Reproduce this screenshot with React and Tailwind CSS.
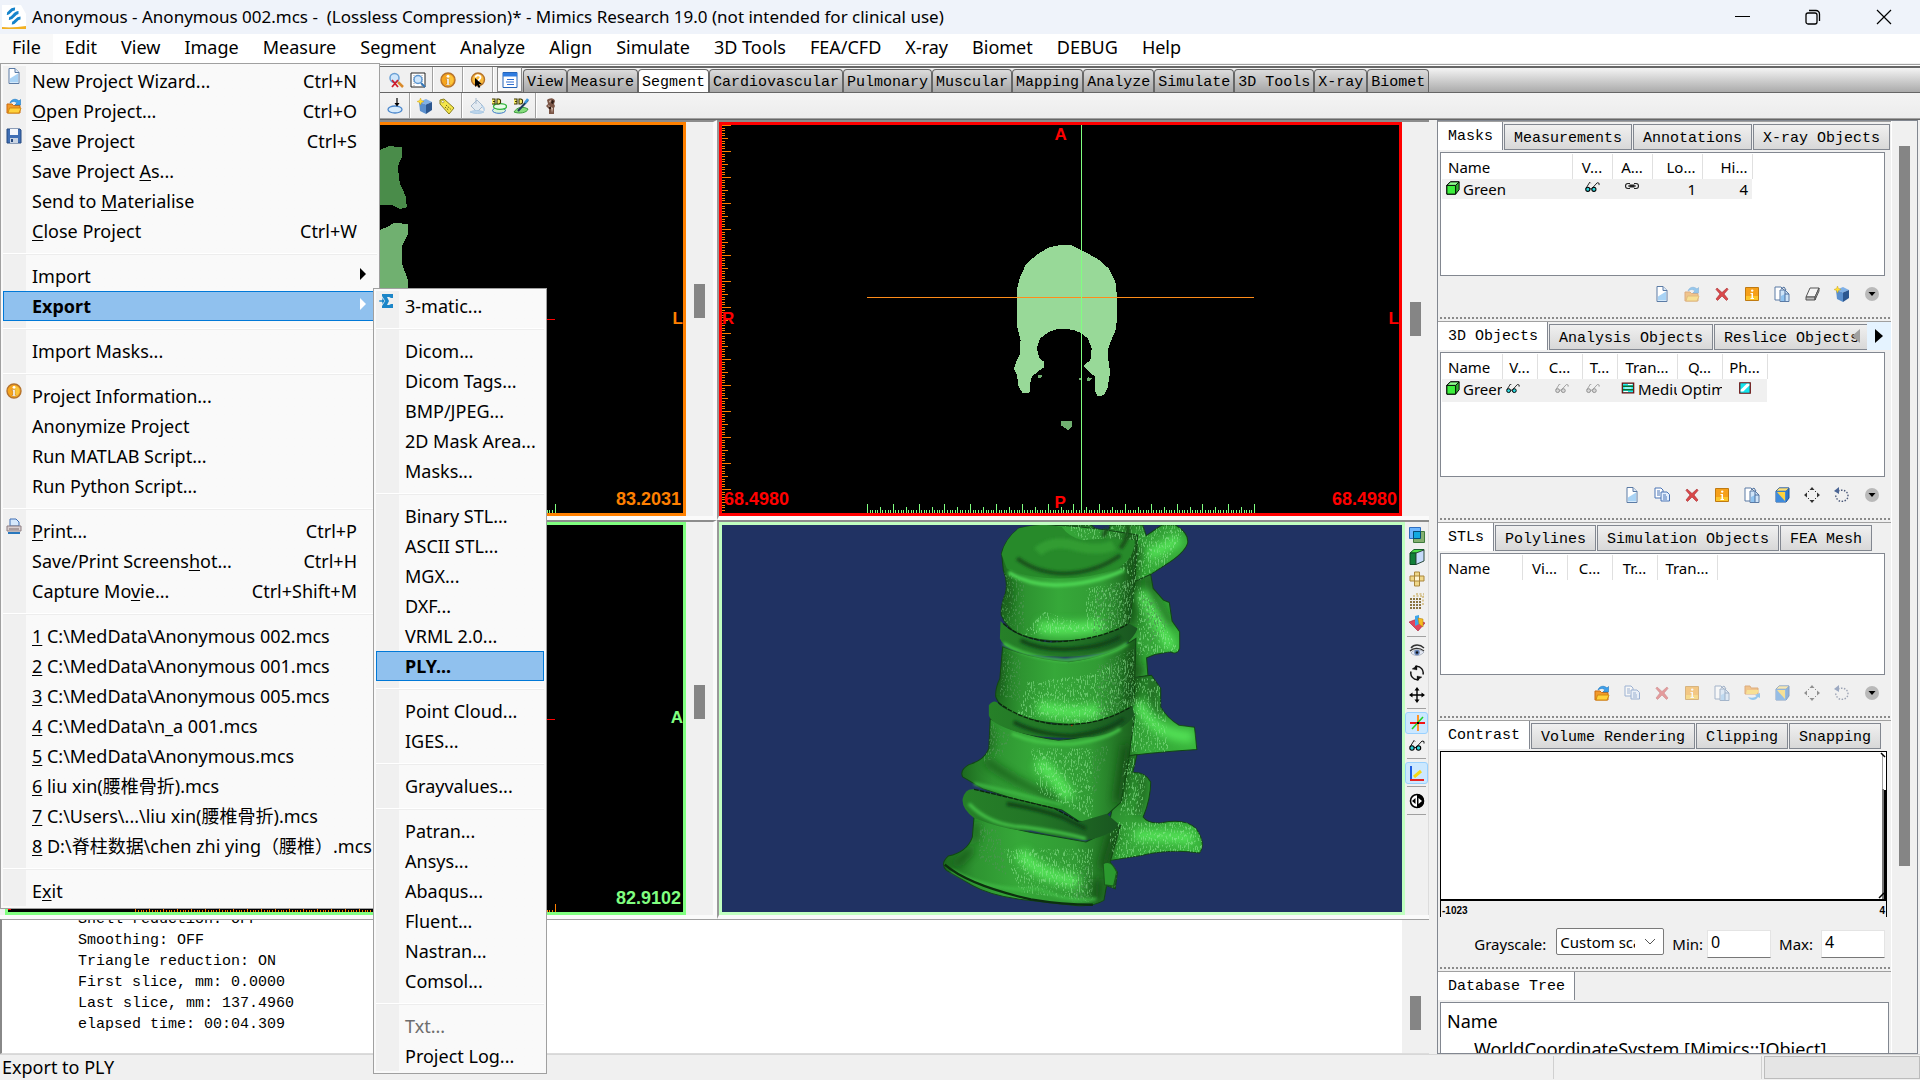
import React from "react";

const UI = "font-['Noto_Sans','Noto_Sans_CJK_SC',sans-serif]";
const MONO = "font-['Liberation_Mono',monospace]";

/* ---------- icons ---------- */

const page = (x, y) => (
  <g>
    <path d={`M${x} ${y}h6l4 4v11h-10z`} fill="#fff" stroke="#5b7ba5" />
    <path d={`M${x + 1} ${y + 14}v-4l8 -5v9z`} fill="#a9d3f5" />
    <path d={`M${x + 6} ${y}v4h4`} fill="#dce9f8" stroke="#5b7ba5" />
  </g>
);

const lens = (
  <g>
    <path d="M10 10l5 5" stroke="#d98a2b" strokeWidth="2.5" />
    <circle cx="6.500" cy="6" r="4.500" fill="#cfe6fb" stroke="#6a9fd4" strokeWidth="1.500" />
  </g>
);

const GLYPHS = {
  page: page(3, 0.5),
  open: (
    <g>
      <path d="M1 6h5l1.500 1.500H14V15H1z" fill="#f39a2b" stroke="#c96a10" />
      <path d="M2 15l1.500-5H15l-2 5z" fill="#ffd23c" stroke="#d38a12" />
      <path d="M4 5c1-4 6-5 9-2l1.500-1.500V7H9l1.800-2C9 3 6.500 3 4 5z" fill="#3da0ec" stroke="#2478bd" strokeWidth=".6" />
    </g>
  ),
  save: (
    <g>
      <path d="M1 1h13l1 1v13H1z" fill="#3f6fb5" stroke="#274a80" />
      <path d="M4 1h8v6H4z" fill="#f4f7fb" />
      <path d="M4 10h8v5H4z" fill="#c9d4e3" />
      <path d="M5 11h2v3H5z" fill="#274a80" />
    </g>
  ),
  info: (
    <g>
      <circle cx="8" cy="8" r="7" fill="#f6a51e" stroke="#b4722c" strokeWidth="1.400" />
      <path d="M8 2.500a5.500 5.500 0 0 1 0 11z" fill="#fbc53a" />
      <path d="M6 6.500h3v5.500h1v1H6v-1h1V7.500H6z" fill="#fff" stroke="#a86a20" strokeWidth=".4" />
      <circle cx="8" cy="4.300" r="1.400" fill="#fff" />
    </g>
  ),
  print: (
    <g>
      <path d="M4 8V1h6l3 3v4z" fill="#d6e8fb" stroke="#3f6fb5" />
      <path d="M1 8h14v5H1z" fill="#d9cfd0" stroke="#8e7f82" />
      <path d="M2 15h12" stroke="#2877bd" strokeWidth="2" />
      <path d="M3 11h10" stroke="#7a6a6d" />
    </g>
  ),
  matic: (
    <g fill="#1c86c8">
      <path d="M3 1h11v4h-2l-2-1H8l2 4-2 4h2l2-1h2v4H3v-2l3-5-3-5z" />
      <path d="M0 7h3V4.500L6 8l-3 3.500V9H0z" stroke="#f0f0f0" strokeWidth=".5" />
    </g>
  ),
  lensX: (
    <g>
      {lens}
      <path d="M4 8l6 7M10 8l-6 7" stroke="#cf1d2b" strokeWidth="1.800" />
    </g>
  ),
  lensPage: (
    <g>
      <path d="M1 1h14v14H1z" fill="#fff" stroke="#222" />
      <path d="M4 1v14M12 1v14" stroke="#999" strokeDasharray="1 1" />
      <circle cx="8" cy="7.500" r="4" fill="#cfe6fb" stroke="#5b95d0" strokeWidth="1.500" />
      <path d="M11 11l4 4" stroke="#3477b8" strokeWidth="2" />
    </g>
  ),
  help: (
    <g>
      <circle cx="8" cy="7.500" r="6.500" fill="#f8b93c" stroke="#b4722c" strokeWidth="1.400" />
      <path d="M5.500 5.500c0-3 5.500-3 5 .2-.2 1.600-2.500 1.600-2.500 4" fill="none" stroke="#fff" strokeWidth="1.800" />
      <path d="M5 6v9l2.200-2 1.600 3 1.600-1-1.600-2.800H12z" fill="#000" />
    </g>
  ),
  list: (
    <g>
      <path d="M1 .5h14v15H1z" fill="#fff" stroke="#2464b8" />
      <path d="M1 1h14v3.500H1z" fill="#2f7ce0" />
      <path d="M5 7.500h7M4 10h8M5 12.500h7" stroke="#2f6fd0" />
    </g>
  ),
  project: (
    <g>
      <ellipse cx="8" cy="11.500" rx="7" ry="3.500" fill="#d7ebfb" stroke="#4a87cc" strokeWidth="1.300" />
      <path d="M10 0v6" stroke="#000" strokeWidth="1.200" />
      <path d="M7.500 5h5L10 8.500z" fill="#000" />
    </g>
  ),
  cube: (
    <g>
      <path d="M2 4l7-3 6 3-6 2.500z" fill="#7fb0e6" />
      <path d="M2 4l7 2.500V16l-6-3z" fill="#5a8fcd" />
      <path d="M15 4L9 6.500V16l6-4z" fill="#2c5790" />
      <path d="M3.500 0l1 2.500L7 3.500 4.500 4.500l-1 2.500-1-2.500L0 3.500l2.500-1z" fill="#ffdd33" stroke="#c79a10" strokeWidth=".4" />
    </g>
  ),
  tag: (
    <g>
      <path d="M1 2l4-1 10 9-5 6L1 6z" fill="#f4e64a" stroke="#8a7f1e" />
      <circle cx="3.800" cy="3.600" r="1.200" fill="#fff" stroke="#8a7f1e" strokeWidth=".6" />
      <path d="M7 7l5 4.500M6 9l4 3.500" stroke="#6b6318" strokeDasharray="1.500 1" />
    </g>
  ),
  bucket: (
    <g opacity=".6">
      <path d="M2 8l6-6 6 6-6 6z" fill="#dbe7f3" stroke="#7596b8" />
      <path d="M7 6V0" stroke="#7596b8" />
      <path d="M1 14c4-2 9-2 14 0-3 2-10 2-14 0zM12 7c3 1 4 4 3 6" fill="#9cc5ea" stroke="#7fb0dc" />
    </g>
  ),
  ring3d: (
    <g>
      <ellipse cx="8" cy="12.500" rx="6.500" ry="2.800" fill="#d7f5d7" stroke="#3c78c8" />
      <ellipse cx="9" cy="8.500" rx="6.500" ry="2.800" fill="#e9fbe9" stroke="#2fb53a" strokeWidth="1.300" />
      <path d="M1 1h3v5H1M2 3.500h2M6 1h2l1.500 1v3L8 6H6z" fill="#f5ec6a" stroke="#3b3500" strokeWidth="1.100" />
    </g>
  ),
  brush3d: (
    <g>
      <path d="M1 14c3-5 9-6 14-3-1 4-9 5-14 3z" fill="#86dd7c" stroke="#3a9d3c" />
      <path d="M1 1h3v5H1M2 3.500h2M6 1h2l1.500 1v3L8 6H6z" fill="#f5ec6a" stroke="#3b3500" strokeWidth="1.100" />
      <path d="M15 2L5 13" stroke="#1c3c5c" strokeWidth="2" />
      <path d="M15 1l-3 4" stroke="#3d97dd" strokeWidth="2.500" />
    </g>
  ),
  bone: (
    <g>
      <path d="M4 2c2-2 7-3 8 1l-1 3 1 2-1 2 0 6H6V11L3 8l2-2z" fill="#7a5546" />
      <path d="M6 3l2-1-1 3zM8 9l2 1-1 5zM5 7l2 1-1 1z" fill="#dcc6b8" />
      <path d="M9 2l2 1-1 3-2-1zM6 9h2v2H6z" fill="#2c1a14" />
    </g>
  ),
  del: <path d="M3 2l5 4.500L13 2l1 1.500L10 8l4 5-1.500 1.500L8 10l-4.500 4.500L2 13l4-5-4-4.500z" fill="#d9484a" stroke="#a82a2e" strokeWidth=".6" />,
  infoBox: (
    <g>
      <path d="M1.500 1.500h13v13h-13z" fill="#f6a01a" stroke="#c07a10" />
      <path d="M2 10h12v4H2z" fill="#fcc62c" />
      <path d="M6.500 7H9v5h1v1H6.500v-1h1V8h-1z" fill="#fff" />
      <circle cx="8.200" cy="4.600" r="1.200" fill="#fff" />
    </g>
  ),
  pages: (
    <g>
      <path d="M1 1h6l4 4v9H1z" fill="#fff" stroke="#5b7ba5" />
      <path d="M6 4h5l4 4v7.500H6z" fill="#cfe4f8" stroke="#5b7ba5" />
      <path d="M7 15v-5l4-2v7z" fill="#8fc3f0" />
      <path d="M7 3l3-2 2 3M11 4v4h4M11 8v7" fill="none" stroke="#4c6f9d" />
    </g>
  ),
  copy: (
    <g>
      <path d="M1 1h6l2 2v8H1z" fill="#fff" stroke="#4a74b5" />
      <path d="M7 5h6l2.500 2.500V14H7z" fill="#e3efff" stroke="#4a74b5" />
      <path d="M3 4h3M3 6h3M3 8h3M9 8h3M9 10h4M9 12h4" stroke="#4a74b5" />
    </g>
  ),
  eraser: (
    <g>
      <path d="M6 2h9l-4 9H2z" fill="#f4f4f4" stroke="#555" />
      <path d="M2 11h9v3H2zM11 11l4-9v3l-4 9z" fill="#bbb" stroke="#555" />
    </g>
  ),
  drop: (
    <g>
      <circle cx="8" cy="8" r="7" fill="#b9b9b9" />
      <path d="M4.500 6h7L8 10z" fill="#000" />
    </g>
  ),
  boxYellow: (
    <g>
      <path d="M2 4l3-3h10v10l-3 4H2z" fill="#3277c8" stroke="#1d5396" />
      <path d="M2 4h10v11H2z" fill="#3f8bdc" />
      <path d="M3 5h8v9z" fill="#ffd23c" />
      <path d="M5 1h10l-3 3H2z" fill="#ffe27a" stroke="#1d5396" strokeWidth=".5" />
    </g>
  ),
  moveDots: (
    <g fill="#333">
      <path d="M8 0l2.500 3h-5zM8 16l2.500-3h-5zM0 8l3-2.500v5zM16 8l-3-2.500v5z" />
      <path d="M4 4h1v1H4zM11 4h1v1h-1zM4 11h1v1H4zM11 11h1v1h-1z" />
    </g>
  ),
  rotateDots: (
    <g>
      <path d="M4 4c5-2 10 0 10 5s-7 7-10 4-2-4-2-5" fill="none" stroke="#4a5878" strokeWidth="1.400" strokeDasharray="1.500 1.500" />
      <path d="M5 0v7L0 4z" fill="#4b6595" />
    </g>
  ),
  folderSync: (
    <g>
      <path d="M1 1h5l1 2h7v6H1z" fill="#f39a2b" stroke="#c96a10" />
      <path d="M2 9l1-4h12l-2 4z" fill="#ffd23c" />
      <path d="M4 12c2 4 8 4 10 0l2 1V8l-5 2 1.500 1C11 13 7 13 4 12z" fill="#3da0ec" />
    </g>
  ),
  overlap: (
    <g>
      <path d="M.5 .5h11v11H.5z" fill="#6db6ff" stroke="#2f6fc0" />
      <path d="M4.500 4.500h11v11h-11z" fill="#84b070" stroke="#3f7a3c" />
      <path d="M4.500 4.500h7v7h-7z" fill="#12a9e0" stroke="#054c78" />
    </g>
  ),
  greenBox: (
    <g>
      <path d="M1 4l4-3.500h10L13 4z" fill="#4ee04a" stroke="#17622c" />
      <path d="M1 4h6v11.500H1z" fill="#13803a" stroke="#0c4a22" />
      <path d="M7 4l8-3v11l-8 3.500z" fill="#c7dbfb" stroke="#2a4a3c" />
    </g>
  ),
  cross3d: (
    <g fill="#f0d88a" stroke="#a9853a">
      <path d="M5.500 1h5v4h4.500v5h-4.500v5h-5v-5H1V5h4.500z" />
      <path d="M5.500 5h5v5h-5z" fill="#fff4d0" />
    </g>
  ),
  dots3d: (
    <g>
      <path d="M1 6h11M1 9h11M1 12h11M1 15h11" stroke="#8a7440" strokeWidth="2" strokeDasharray="2 1" />
      <path d="M4 3h11M7 1h8M14 3v10" fill="none" stroke="#d0b878" strokeWidth="1.500" strokeDasharray="2 1.500" />
    </g>
  ),
  planes: (
    <g>
      <path d="M0 7l8-3 8 4-7 8z" fill="#e2445c" stroke="#a51f38" strokeWidth=".6" />
      <path d="M6 1l4-1v9l-4 2z" fill="#3fa6ea" />
      <path d="M9 3l5 1v8l-4-3z" fill="#f7bd22" stroke="#a9780c" strokeWidth=".5" />
    </g>
  ),
  eye: (
    <g fill="none">
      <path d="M2 5c3-4 9-4 13 0M1 8c3-3 9-4 14 0" stroke="#333" strokeWidth="1.300" />
      <path d="M2 10c3-4 9-4 13-1-3 4-9 5-13 1z" fill="#e3e8f2" stroke="#8a93a5" strokeWidth=".6" />
      <circle cx="8" cy="9.500" r="2.700" fill="#5f7fb5" />
      <circle cx="8" cy="9.500" r="1.200" fill="#111" />
    </g>
  ),
  rotate: (
    <g fill="none" stroke="#111" strokeWidth="1.500">
      <path d="M6 1.500c6-1 9 4 8 8M10 14.500c-6 1-9-4-8-8" />
      <path d="M3 4l5-3.500V5zM13 12l-5 3.500V11z" fill="#111" strokeWidth=".3" />
    </g>
  ),
  move: (
    <g>
      <path d="M8 2v12M2 8h12" stroke="#000" strokeWidth="1.400" />
      <path d="M8 0l2.500 3.500h-5zM8 16l2.500-3.500h-5zM0 8l3.500-2.500v5zM16 8l-3.500-2.500v5z" />
    </g>
  ),
  axes: (
    <g>
      <path d="M9 0v16" stroke="#ff9326" strokeWidth="2" />
      <path d="M1 8h15" stroke="#f21414" strokeWidth="2" />
      <path d="M3 14L14 2" stroke="#22d022" strokeWidth="1.600" />
      <path d="M8 7h2v2H8z" />
    </g>
  ),
  glasses: (
    <g fill="none" stroke="#000" strokeWidth="1.100">
      <circle cx="3" cy="11" r="2.200" fill="#2fd6dc" />
      <circle cx="9.500" cy="11" r="2.200" fill="#2fd6dc" />
      <path d="M1 10L5 3.500l1 1M7.500 10L13 4l2 .5v2M5.200 10.500h2" strokeWidth=".9" />
    </g>
  ),
  corner: (
    <g>
      <path d="M2 1v14" stroke="#1d5ce0" strokeWidth="2" />
      <path d="M1 15h14" stroke="#e62222" strokeWidth="2" />
      <path d="M5 12l7-6" stroke="#f5d714" strokeWidth="3" />
    </g>
  ),
  contrast: (
    <g>
      <circle cx="8" cy="8" r="6.500" fill="#fff" stroke="#000" strokeWidth="1.600" />
      <path d="M8 1a7 7 0 0 1 0 14z" />
      <path d="M6.500 5v6L3 8z" />
      <path d="M9.500 5v6L13 8z" fill="#fff" />
    </g>
  ),
  link: (
    <g fill="none" stroke="#222" strokeWidth="1.100">
      <path d="M6 4.500H4a2.300 2.300 0 0 0 0 5h2M10 4.500h2a2.300 2.300 0 0 1 0 5h-2M4 7h8M6 6h4v2H6z" />
    </g>
  ),
  block: (
    <g stroke="#000" strokeWidth="1.100">
      <path d="M1 5l4-4h10v9l-4 5H1z" fill="#2fae2f" />
      <path d="M1 5h10v10H1z" fill="#3cf03c" />
      <path d="M1 5l4-4h10l-4 4z" fill="#8dff8d" />
    </g>
  ),
  transp: (
    <g>
      <path d="M1.500 2.500h13v11h-13z" fill="#22f0f0" stroke="#6b0a0a" strokeWidth="1.400" />
      <path d="M2 6h12M2 10h12" stroke="#0f6b2f" strokeWidth="1.600" />
      <path d="M4 8h8M8 4h5M3 12h5" stroke="#fff" strokeWidth="1.400" />
    </g>
  ),
  photo: (
    <g>
      <path d="M2 2h12v12H2z" fill="#12e6ee" stroke="#6b0a0a" strokeWidth="1.400" />
      <path d="M3 10l7-7h3v2l-7 7H3z" fill="#fff" />
    </g>
  ),
  logo: (
    <g>
      <path d="M0 0h19l5 9v13H0z" fill="#fff" />
      <path d="M0 24h24v-3C16 22 8 23 0 22z" fill="#f2b022" />
      <path d="M5 8.500c3 .5 3-5 8-4.500M7 13.500c4 .5 5-6 9.500-6M10 18c3 .5 4-5 8.500-5" fill="none" stroke="#1583cb" strokeWidth="3" />
    </g>
  ),
};

function Icon({ name, size = 16, box = 16, className = "" }) {
  return (
    <svg viewBox={`0 0 ${box} ${box}`} width={size} height={size} className={`shrink-0 ${className}`} aria-hidden="true">
      {GLYPHS[name]}
    </svg>
  );
}

/* ---------- title, menu bar, tool bars ---------- */

function TitleBar() {
  return (
    <header className="flex h-[34px] shrink-0 items-center bg-[#eff3fa] pl-0.5">
      <Icon name="logo" size={24} box={24} />
      <h1 className="ml-1.5 flex-1 text-[17px] leading-6 whitespace-pre">
        Anonymous - Anonymous 002.mcs -  (Lossless Compression)* - Mimics Research 19.0 (not intended for clinical use)
      </h1>
      <button aria-label="Minimize" className="grid h-full w-[70px] place-items-center">
        <svg width="16" height="16" stroke="#000" strokeWidth="1"><path d="M0 7.500h15" /></svg>
      </button>
      <button aria-label="Restore" className="grid h-full w-[70px] place-items-center">
        <svg width="16" height="16" fill="none" stroke="#000" strokeWidth="1.300">
          <rect x="1" y="4" width="11" height="11" rx="2" />
          <path d="M4 1.500h7a3.500 3.500 0 0 1 3.500 3.500v7" />
        </svg>
      </button>
      <button aria-label="Close" className="grid h-full w-[72px] place-items-center">
        <svg width="16" height="16" stroke="#000" strokeWidth="1.200"><path d="M1 1l14 14M15 1L1 15" /></svg>
      </button>
    </header>
  );
}

const MENUS = ["File", "Edit", "View", "Image", "Measure", "Segment", "Analyze", "Align", "Simulate", "3D Tools", "FEA/CFD", "X-ray", "Biomet", "DEBUG", "Help"];

function MenuBar() {
  return (
    <nav className="flex h-[29px] shrink-0 bg-white">
      {MENUS.map((m, i) => (
        <button key={m} className={`px-3 pb-1 text-lg leading-6 ${i === 0 ? "bg-[#f9f9f9]" : ""}`}>{m}</button>
      ))}
    </nav>
  );
}

const Sep = () => <div className="mx-[3px] h-full w-0.5 border-l border-[#a0a0a0] bg-white" />;
const Tool = ({ name, label, wide }) => (
  <button aria-label={label || name} className={`grid h-full place-items-center ${wide ? "w-[25px] border border-[#888] bg-[#f8f8f8]" : "w-[22px]"}`}>
    <Icon name={name} />
  </button>
);

const RIBBON = ["View", "Measure", "Segment", "Cardiovascular", "Pulmonary", "Muscular", "Mapping", "Analyze", "Simulate", "3D Tools", "X-ray", "Biomet"];

function ToolBars() {
  return (
    <div className="shrink-0 border-t border-[#f0f0f0] bg-[#f0f0f0]">
      <div className="h-0.5 border-t border-[#a0a0a0] bg-white" />
      <div className="flex h-[27px] border-b border-[#666]">
        <div className="flex border-t border-[#666] pl-[385px]">
          <Tool name="lensX" />
          <Tool name="lensPage" />
          <Sep />
          <Tool name="info" />
          <Sep />
          <Tool name="help" />
          <Sep />
          <Tool name="list" wide />
        </div>
        <div className={`flex flex-1 items-end border-t-2 border-[#666] bg-linear-to-b from-[#f4f4f4] to-[#ababab] pl-px ${MONO}`}>
          {RIBBON.map((t) => (
            <button
              key={t}
              className={`h-[23px] rounded-t-[4px] border border-b-0 border-[#666] px-[3px] text-[15px] leading-[25px] ${t === "Segment" ? "bg-white" : "bg-linear-to-b from-[#dcdcdc] to-[#a6a6a6]"}`}
            >
              {t}
            </button>
          ))}
        </div>
      </div>
      <div className="flex h-[26px] border-b border-[#a0a0a0] bg-linear-to-b from-[#f4f4f4] to-[#ececec] pl-[384px]">
        <Tool name="project" />
        <Sep />
        <Tool name="cube" />
        <Tool name="tag" />
        <Sep />
        <Tool name="bucket" />
        <Tool name="ring3d" />
        <Tool name="brush3d" />
        <Sep />
        <Tool name="bone" />
      </div>
    </div>
  );
}

/* ---------- drop-down menus ---------- */

const FILE_MENU = [
  ["New Project Wizard...", "Ctrl+N", "page"],
  ["_Open Project...", "Ctrl+O", "open"],
  ["_Save Project", "Ctrl+S", "save"],
  ["Save Project _As..."],
  ["Send to _Materialise"],
  ["_Close Project", "Ctrl+W"],
  null,
  ["Import", "sub"],
  ["Export", "sub"],
  null,
  ["Import Masks..."],
  null,
  ["Project Information...", "", "info"],
  ["Anonymize Project"],
  ["Run MATLAB Script..."],
  ["Run Python Script..."],
  null,
  ["_Print...", "Ctrl+P", "print"],
  ["Save/Print Screens_hot...", "Ctrl+H"],
  ["Capture Mo_vie...", "Ctrl+Shift+M"],
  null,
  ["_1 C:\\MedData\\Anonymous 002.mcs"],
  ["_2 C:\\MedData\\Anonymous 001.mcs"],
  ["_3 C:\\MedData\\Anonymous 005.mcs"],
  ["_4 C:\\MedData\\n~a 001.mcs"],
  ["_5 C:\\MedData\\Anonymous.mcs"],
  ["_6 liu xin(腰椎骨折).mcs"],
  ["_7 C:\\Users\\...\\liu xin(腰椎骨折).mcs"],
  ["_8 D:\\脊柱数据\\chen zhi ying（腰椎）.mcs"],
  null,
  ["E_xit"],
];

const EXPORT_MENU = [
  ["3-matic...", "", "matic"], null,
  ["Dicom..."], ["Dicom Tags..."], ["BMP/JPEG..."], ["2D Mask Area..."], ["Masks..."], null,
  ["Binary STL..."], ["ASCII STL..."], ["MGX..."], ["DXF..."], ["VRML 2.0..."], ["PLY..."], null,
  ["Point Cloud..."], ["IGES..."], null,
  ["Grayvalues..."], null,
  ["Patran..."], ["Ansys..."], ["Abaqus..."], ["Fluent..."], ["Nastran..."], ["Comsol..."], null,
  ["Txt..."], ["Project Log..."],
];

/* "_" marks the mnemonic letter, "~" is a literal underscore */
function Mnemonic({ text }) {
  const i = text.indexOf("_");
  const clean = (s) => s.replace("~", "_");
  if (i < 0) return clean(text);
  return (
    <>
      {clean(text.slice(0, i))}
      <u className="underline-offset-2">{text[i + 1]}</u>
      {clean(text.slice(i + 2))}
    </>
  );
}

function Menu({ items, active, disabled, className }) {
  return (
    <div role="menu" className={`absolute z-10 border border-[#a0a0a0] bg-[#f9f9f9] p-0.5 ${className}`}>
      <div className="bg-linear-to-r from-[#f0f0f0] from-[23px] to-[#f9f9f9] to-[23px]">
        {items.map((it, i) => {
          if (!it) return <div key={i} className="flex h-[15px] items-center"><div className="h-0.5 w-full border-t border-white bg-[#ededed]" /></div>;
          const [text, key, icon] = it;
          const on = text === active;
          return (
            <button
              key={i}
              role="menuitem"
              disabled={text === disabled}
              className={`flex h-[30px] w-full items-center overflow-hidden pr-5 text-lg leading-7 whitespace-nowrap disabled:text-[#6d6d6d] ${on ? "bg-[#90c1ee] font-bold outline outline-[#0078d7] -outline-offset-1" : ""}`}
            >
              <span className="flex h-full w-[29px] shrink-0 items-start pt-0.5 pl-[3px]">{icon && <Icon name={icon} />}</span>
              <span className="shrink-0"><Mnemonic text={text} /></span>
              {key === "sub" ? (
                <svg width="7" height="12" className={`-mr-2.5 mb-1 ml-auto ${on ? "fill-white" : "fill-black"}`}><path d="M0 0l6 6-6 6z" /></svg>
              ) : (
                <span className="ml-auto">{key}</span>
              )}
            </button>
          );
        })}
      </div>
    </div>
  );
}

/* ---------- view ports ---------- */

const range = (n) => Array.from({ length: n }, (_, i) => i);

function RulerX({ x0, x1, y, color }) {
  const n = 150;
  return (
    <g stroke={color}>
      {range(n + 1).map((i) => {
        const x = Math.round(x0 + ((x1 - x0) * i) / n) + 0.5;
        const len = i % 10 === 0 ? 8 : i % 5 === 0 ? 5 : 2;
        return <path key={i} d={`M${x} ${y}v${-len}`} />;
      })}
    </g>
  );
}

function RulerY({ h, color }) {
  return (
    <g stroke={color}>
      {range(149).map((i) => {
        const y = Math.round(i * 2.6) + 0.5;
        if (y > h) return null;
        const len = i % 10 === 0 ? 9 : i % 5 === 0 ? 6 : 3;
        return <path key={i} d={`M0 ${y}h${len}`} />;
      })}
    </g>
  );
}

function Scroll({ before, after }) {
  return (
    <div className="flex w-[27px] shrink-0 flex-col bg-[#f0f0f0] pl-2">
      <div className={before} />
      <div className="h-[34px] w-[11px] bg-[#858585]" />
      <div className={after} />
    </div>
  );
}

const Cell = ({ children, className }) => (
  <div className={`flex min-h-0 min-w-0 border-t-2 border-b-4 border-t-[#8c8c8c] border-b-[#fafafa] ${className}`}>{children}</div>
);

const labelCls = "absolute font-['Liberation_Sans',Arial,sans-serif] font-bold";
const letterCls = `${labelCls} text-[17px] leading-5`;
const valueCls = `${labelCls} bottom-1 text-lg leading-5`;

function Coronal() {
  return (
    <div className="relative min-w-0 flex-1 border-[3px] border-[#ff8000] bg-black">
      <svg viewBox="0 0 675 387" preserveAspectRatio="none" className="block h-full w-full" shapeRendering="crispEdges">
        <g transform="translate(-8 -125) scale(.408 .3333)">
          <path d="M930 450L955 438L985 442V470L975 500L980 550L995 590L997 622L980 627L960 615H930z" fill="#4a8c4a" />
          <path d="M930 690L950 680L965 668L1000 672V700L985 740V790L1000 840V862H930z" fill="#70b070" />
        </g>
        <path d="M539 194.500h8" stroke="#f00" />
        <RulerX x0={127} x1={547} y={387} color="#80ff80" />
      </svg>
      <span className={`${letterCls} top-1/2 right-0 -mt-2.5 text-[#ff8000]`}>L</span>
      <span className={`${valueCls} right-0.5 text-[#ff8000]`}>83.2031</span>
    </div>
  );
}

function Sagittal() {
  return (
    <div className="relative min-w-0 flex-1 border-[3px] border-[#80ff80] bg-black">
      <svg viewBox="0 0 675 387" preserveAspectRatio="none" className="block h-full w-full" shapeRendering="crispEdges">
        <path d="M539 194.500h8M0 384.500h3" stroke="#f00" />
        <RulerX x0={127} x1={547} y={387} color="#ff8000" />
      </svg>
      <span className={`${letterCls} top-1/2 right-0 -mt-2.5 text-[#80ff80]`}>A</span>
      <span className={`${valueCls} right-0.5 text-[#80ff80]`}>82.9102</span>
    </div>
  );
}

function Axial() {
  return (
    <div className="relative min-w-0 flex-1 border-[3px] border-[#ff0000] bg-black text-[#ff0000]">
      <svg viewBox="0 0 677 387" preserveAspectRatio="none" className="block h-full w-full" shapeRendering="crispEdges">
        <g transform="translate(-22 -15) scale(.4592 .3333)">
          <path
            fill="#98d998"
            d="M735 432L760 412L780 406L795 404L810 406L830 420L850 434L870 450L890 475L899 498L905 518L909 570V620L905 660L897 685L889 715V745L893 785L888 830L880 855L865 857L861 845V800L850 787L834 767L850 750L853 715L845 685L830 668L815 660L795 655L775 658L760 665L740 685L733 715L740 745L750 755V770L735 785L723 798L719 820V845L712 849L703 848L694 830L690 795L684 775L690 750L697 730L698 690L690 645V540L697 500L710 462z"
          />
          <path d="M787 933H811V947L802 960L797 955L785 944zM735 800l3-6h7v4l-3 6h-7zM842 802l5-1 6 3-3 7h-7zM825 804h4v4h-4z" fill="#70b070" />
        </g>
        <path d="M145 172.500H532" stroke="#ff8c1a" />
        <path d="M359.500 0V387" stroke="#80ff80" />
        <RulerX x0={145} x1={532} y={387} color="#80ff80" />
        <RulerY h={387} color="#ff8000" />
      </svg>
      <span className={`${letterCls} top-0 left-1/2 -ml-1.5`}>A</span>
      <span className={`${letterCls} bottom-0 left-1/2 -ml-1.5`}>P</span>
      <span className={`${letterCls} top-1/2 left-0 -mt-2.5`}>R</span>
      <span className={`${letterCls} top-1/2 right-0 -mt-2.5`}>L</span>
      <span className={`${valueCls} left-0.5`}>68.4980</span>
      <span className={`${valueCls} right-0.5`}>68.4980</span>
    </div>
  );
}

const BODIES = [
  "M295 115C300 90 320 60 345 40Q440 15 690 60L682 200L665 325C640 350 600 366 540 372Q430 386 350 360Q310 340 294 300Q292 270 306 235Q314 200 300 165z",
  "M298 395Q380 430 490 440Q610 425 685 370L680 570Q630 625 540 630Q400 625 340 600Q290 580 278 545Q276 520 290 490z",
  "M262 610Q340 660 460 675Q590 665 682 595L660 760L642 860L605 895L560 922L520 918L470 884L330 850L240 820L182 785Q172 765 200 748Q245 735 258 700z",
  "M215 905Q330 945 430 960L540 980L640 930L610 1040L631 1070L625 1120L600 1110L592 1155Q560 1175 510 1170L380 1155Q270 1145 210 1110L135 1065Q115 1045 140 1022Q195 1010 210 965z",
];
const DISCS = [
  "M292 318Q330 368 430 382Q580 378 665 325L690 340Q670 392 600 412Q490 434 370 417Q300 400 290 370z",
  "M258 570Q275 548 290 570Q340 608 440 626Q580 635 675 572L680 600Q650 650 560 665Q430 675 340 650Q262 625 258 600z",
  "M182 850Q190 818 215 822L330 850L450 880L520 920L600 895L634 925Q630 955 540 975Q450 965 380 945Q320 950 215 908Q178 880 182 850z",
];
const PROCESSES = [
  "M475 30H555L600 68L610 30H705L715 62L760 30H800Q840 55 835 85Q825 115 770 150L728 178L682 200L640 110L520 76z",
  "M680 200L728 178L735 220L765 255L782 262L790 318L812 350V400Q805 420 785 410L740 418L716 428L720 482L668 490L660 330z",
  "M672 488L730 480L757 520V575Q775 608 810 630L855 636L862 703L790 708L720 715L655 722z",
  "M648 725L688 718L676 772Q712 770 728 800Q728 850 706 905Q720 926 760 922Q830 908 860 940Q890 985 870 1013Q790 1000 700 1020L606 1036L600 960z",
];

function Model3D() {
  return (
    <div className="min-w-0 flex-1 border-[3px] border-[#c0ffc0] bg-[#203263]">
      <svg viewBox="0 0 680 387" preserveAspectRatio="none" className="block h-full w-full">
        <defs>
          <linearGradient id="body" x1="0" x2="1">
            <stop offset="0" stopColor="#1d6a1f" />
            <stop offset=".18" stopColor="#2e9431" />
            <stop offset=".42" stopColor="#36a839" />
            <stop offset=".74" stopColor="#319b34" />
            <stop offset="1" stopColor="#1b5f1d" />
          </linearGradient>
          <linearGradient id="proc" x1="0" y1="0" x2="1" y2="1">
            <stop offset="0" stopColor="#1f6b22" />
            <stop offset=".45" stopColor="#33a036" />
            <stop offset="1" stopColor="#3ab83d" />
          </linearGradient>
          <linearGradient id="disc" x1="0" x2="1">
            <stop offset="0" stopColor="#268028" />
            <stop offset=".5" stopColor="#227426" />
            <stop offset="1" stopColor="#195620" />
          </linearGradient>
          <filter id="soft" x="-20%" y="-20%" width="140%" height="140%"><feGaussianBlur stdDeviation="12" /></filter>
          <filter id="soft2" x="-20%" y="-40%" width="140%" height="180%"><feGaussianBlur stdDeviation="5" /></filter>
          <filter id="grain" x="0" y="0" width="100%" height="100%">
            <feTurbulence type="fractalNoise" baseFrequency=".3 .09" numOctaves="2" seed="4" />
            <feColorMatrix values="0 0 0 0 .31  0 0 0 0 .84  0 0 0 0 .33  9 0 0 0 -4.900" />
            <feComposite in2="SourceGraphic" operator="in" />
          </filter>
          <filter id="grainDark" x="0" y="0" width="100%" height="100%">
            <feTurbulence type="fractalNoise" baseFrequency=".3 .1" numOctaves="2" seed="11" />
            <feColorMatrix values="0 0 0 0 .07  0 0 0 0 .3  0 0 0 0 .08  9 0 0 0 -5" />
            <feComposite in2="SourceGraphic" operator="in" />
          </filter>
          <clipPath id="spine">
            {[...PROCESSES, ...BODIES, ...DISCS].map((d) => <path key={d} d={d} />)}
          </clipPath>
        </defs>
        <g transform="translate(178 -10) scale(.3444 .3333)">
          {PROCESSES.map((d) => <path key={d} d={d} fill="url(#proc)" stroke="#124516" strokeWidth="3" />)}
          {BODIES.map((d) => <path key={d} d={d} fill="url(#body)" stroke="#124516" strokeWidth="3" />)}
          <g clipPath="url(#spine)">
            <g filter="url(#soft)" fill="none" stroke="#155018" strokeWidth="30" opacity=".85">
              <path d="M690 90Q670 200 668 330M680 400Q670 500 672 570M660 690L635 860M620 950L590 1060M575 1090L570 1160" />
              <path d="M730 180Q715 240 790 330M740 490Q720 540 760 600M700 780Q720 830 690 900" strokeWidth="16" />
              <path d="M250 735Q310 790 470 860M210 1000L160 1050M700 450L690 490" strokeWidth="20" />
              <path d="M300 180Q330 250 296 300M295 420L285 540M262 640V710M220 920V980" strokeWidth="16" />
            </g>
            <g filter="url(#soft)" fill="none" stroke="#58ea5c" strokeWidth="40" opacity=".9">
              <path d="M400 335Q500 350 590 330M400 575Q500 600 580 585M400 740Q470 800 490 850M350 1010Q390 1080 520 1100" />
              <path d="M720 120Q790 90 810 70M700 230L790 400M690 560Q730 660 850 665M680 960Q780 960 850 970" strokeWidth="34" />
            </g>
            {/* facet striping of the triangulated surface */}
            <g filter="url(#grain)" opacity=".5">
              <path d="M540 220L690 190L665 340L350 360L420 290L540 330zM370 500L540 480L680 420V570L540 630L340 600zM380 700L560 700V910L400 830zM300 1000L560 1000V1160L350 1130zM475 30H835L770 150L690 200zM690 200L812 410L690 420zM680 490H760L780 710H670zM650 730H720L700 900H640zM600 920H880V1012L620 1030z" />
            </g>
            <g filter="url(#grainDark)" opacity=".75">
              <path d="M300 170L360 190V360L290 310zM570 230L680 190L660 330L560 360zM570 450L680 400V570L570 610zM300 410L350 430V560L290 540zM265 620L320 660L300 720L240 740zM560 700L610 690L560 860zM230 920L290 950L310 1080L230 1030zM500 1080L560 1040V1160H500zM700 240L740 250L780 330L730 400zM600 1050h30v70h-30z" />
            </g>
          </g>
          <path d="M295 118Q305 70 345 40Q410 22 470 36Q490 66 530 76L600 70L682 76Q680 135 630 160Q550 192 450 190Q360 186 310 160z" fill="#278a2a" />
          <g filter="url(#soft2)" fill="none">
            <path d="M340 130Q400 176 480 175Q570 172 640 120" stroke="#15501a" strokeWidth="12" />
            <path d="M400 110Q440 70 520 95Q580 110 620 90" stroke="#309c33" strokeWidth="30" />
            <path d="M315 172Q370 208 450 210Q560 208 650 165" stroke="#50da55" strokeWidth="11" />
          </g>
          {DISCS.map((d) => <path key={d} d={d} fill="url(#disc)" />)}
          <g fill="none">
            <path d="M300 325Q350 372 440 380Q570 378 660 328M285 562Q350 612 440 626Q570 638 672 574M215 822L330 850L450 880L520 920" stroke="#0b260c" strokeWidth="4" strokeDasharray="14 3" />
            <g filter="url(#soft2)">
              <path d="M350 375Q400 403 480 402Q580 400 640 365M330 620Q400 658 500 662Q600 650 650 610M310 865Q400 880 470 905L540 940" stroke="#114214" strokeWidth="12" />
              <path d="M300 385Q370 428 480 436Q610 424 660 385M325 655Q400 690 500 686Q600 672 640 640M200 865Q260 930 360 935Q470 950 540 970" stroke="#46c84a" strokeWidth="9" />
              <path d="M215 805Q330 832 470 868M150 1065Q260 1130 400 1120Q500 1165 570 1150" stroke="#40bb44" strokeWidth="8" />
              <path d="M640 100Q670 60 660 30M600 40L590 66" stroke="#164f18" strokeWidth="12" />
            </g>
            <path d="M130 1048Q200 1110 380 1152Q470 1168 560 1168" stroke="#0c2f0e" strokeWidth="7" />
          </g>
          <path d="M590 1045Q612 1030 629 1070L620 1112L594 1108z" fill="#2b9a2e" stroke="#1a5a1c" strokeWidth="3" />
          <circle cx="499" cy="631" r="2" fill="#e00" />
        </g>
      </svg>
    </div>
  );
}

const SIDE_TOOLS = ["overlap", "greenBox", "cross3d", "dots3d", "planes", "", "eye", "rotate", "move", "", "axes", "glasses", "", "corner", "", "contrast", ""];

function SideTools() {
  return (
    <div className="flex w-6 shrink-0 flex-col border-r border-[#dcdcdc] bg-[#f0f0f0] pt-0.5">
      {SIDE_TOOLS.map((n, i) =>
        n ? (
          <button key={i} aria-label={n} className={`grid h-[22px] place-items-center ${n === "axes" || n === "corner" ? "rounded-[3px] border border-[#99d1ff] bg-[#cce8ff]" : ""}`}>
            <Icon name={n} />
          </button>
        ) : (
          <div key={i} className="flex h-1.5 items-center px-0.5"><div className="h-px w-full bg-[#a0a0a0]" /></div>
        )
      )}
    </div>
  );
}

const LOG = ["Shell reduction: OFF", "Smoothing: OFF", "Triangle reduction: ON", "First slice, mm: 0.0000", "Last slice, mm: 137.4960", "elapsed time: 00:04.309"];

function LogPane() {
  return (
    <div className="flex h-[135px] shrink-0 border-t border-b border-l-2 border-t-[#a0a0a0] border-b-[#dcdcdc] border-l-[#888] bg-white">
      <div className={`flex flex-1 flex-col justify-end overflow-hidden pb-[18px] pl-[76px] text-[15px] leading-[21px] ${MONO}`}>
        {LOG.map((l) => <p key={l} className="shrink-0">{l}</p>)}
      </div>
      <Scroll before="grow-[80]" after="grow-[24]" />
    </div>
  );
}

/* ---------- object panels ---------- */

function Tabs({ tabs, children }) {
  return (
    <div className={`flex h-7 items-end gap-px overflow-hidden ${MONO}`}>
      {tabs.map((t, i) => (
        <button
          key={t}
          className={`shrink-0 text-[15px] whitespace-nowrap ${i === 0 ? "h-7 border-r border-[#828790] bg-white pr-[9px] pl-2.5 pt-0.5 leading-6" : "h-[26px] border border-[#828790] bg-linear-to-b from-[#f0f0f0] to-[#d8d8d8] px-[9px] pt-0.5 leading-6"}`}
        >
          {t}
        </button>
      ))}
      {children}
    </div>
  );
}

const Dots = () => (
  <div className="flex h-[9px] items-end pb-0.5 pl-0.5">
    <div className="h-0.5 w-full bg-[repeating-linear-gradient(90deg,#8a8a8a_0_2px,transparent_2px_4px)]" />
  </div>
);

function Section({ tabs, tabExtra, tools, disabled = [], listClass = "h-[124px]", children }) {
  return (
    <section className="border-t border-[#a0a0a0]">
      <Tabs tabs={tabs}>{tabExtra}</Tabs>
      <div className={`mt-0.5 mr-1.5 ml-0.5 overflow-hidden border border-[#828790] bg-white px-px pt-px ${listClass}`}>{children}</div>
      <div className="flex h-9 items-center justify-end pr-1">
        {tools.map((t, i) => (
          <button key={i} aria-label={t} disabled={disabled.includes(t)} className="grid h-6 w-[30px] place-items-center disabled:opacity-50">
            <Icon name={t} />
          </button>
        ))}
      </div>
      <Dots />
    </section>
  );
}

function Grid({ cols, head, align = [], row, rowClass = "h-5" }) {
  return (
    <table className="w-px table-fixed border-collapse text-[15px] leading-5">
      <colgroup>{cols.map((w, i) => <col key={i} style={{ width: w }} />)}</colgroup>
      <thead>
        <tr className="h-[25px]">
          {head.map((h, i) => (
            <th key={i} className={`overflow-hidden border-r border-[#e0e0e0] p-0 font-normal whitespace-nowrap ${i === 0 ? "pl-1.5 text-left" : align[i] || "text-center"}`}>{h}</th>
          ))}
        </tr>
      </thead>
      {row && (
        <tbody>
          <tr className={`bg-[#f0f0f0] ${rowClass}`}>
            {row.map((c, i) => (
              <td key={i} className={`overflow-hidden p-0 align-top whitespace-nowrap ${align[i] || ""}`}>{c}</td>
            ))}
          </tr>
        </tbody>
      )}
    </table>
  );
}

const IconCell = ({ name, dim, children }) => (
  <span className="flex items-start gap-[3px] pl-1">
    <Icon name={name} size={14} className={`mt-0.5 ${dim ? "opacity-40 grayscale" : ""}`} />
    {children}
  </span>
);

function Contrast() {
  return (
    <section className="border-t border-[#a0a0a0]">
      <Tabs tabs={["Contrast", "Volume Rendering", "Clipping", "Snapping"]} />
      <div className="mt-0.5 mr-1 ml-0.5 flex h-[150px] justify-end border border-b-2 border-black bg-white">
        <svg width="8" height="147" fill="none" stroke="#000">
          <path d="M4.500 2v35" stroke="#a0a0a0" />
          <path d="M5 37v110" stroke="#777" strokeWidth="2" />
          <path d="M7 38v109" strokeWidth="2" />
          <path d="M3 1l4 4M1 146l5-5" strokeWidth="1.500" />
        </svg>
      </div>
      <div className="mr-1 ml-0.5 flex h-[18px] items-start justify-between font-['Liberation_Sans',Arial,sans-serif] text-[10px] leading-3 font-bold">
        <span className="border-l border-black pl-px"><span className="block pt-1">-1023</span></span>
        <span className="border-r border-black pr-px"><span className="block pt-1">4</span></span>
      </div>
      <div className="flex h-[43px] items-center justify-end pt-1.5 pr-1.5 text-[15px] leading-6">
        <label htmlFor="gray">Grayscale:</label>
        <div className="relative ml-2.5 -mt-1">
          <select id="gray" className="block h-[27px] w-[108px] appearance-none overflow-hidden rounded-[2px] border border-[#7a7a7a] bg-white pr-7 pl-[3px]">
            <option>Custom scale</option>
          </select>
          <svg width="12" height="8" className="pointer-events-none absolute top-2.5 right-2" fill="none" stroke="#555"><path d="M1 1l5 5 5-5" /></svg>
        </div>
        <label htmlFor="min" className="ml-2">Min:</label>
        <input id="min" defaultValue="0" className="ml-1 h-7 w-[64px] border border-[#e4e4e4] border-b-[#777] bg-white pb-1 pl-[3px] text-base" />
        <label htmlFor="max" className="ml-2">Max:</label>
        <input id="max" defaultValue="4" className="ml-2 h-7 w-[64px] border border-[#e4e4e4] border-b-[#777] bg-white pb-1 pl-[3px] text-base" />
      </div>
      <Dots />
    </section>
  );
}

function SidePanel() {
  return (
    <aside className="flex w-[491px] shrink-0 bg-[#f0f0f0] pl-2">
      <div className="mr-0.5 flex min-h-0 flex-1 border-t border-r border-b border-l border-[#828790]">
        <div className="flex min-w-0 flex-1 flex-col overflow-hidden">
          <Section
            tabs={["Masks", "Measurements", "Annotations", "X-ray Objects"]}
            tools={["page", "open", "del", "infoBox", "pages", "eraser", "cube", "drop"]}
            disabled={["open"]}
          >
            <Grid
              cols={[130, 40, 40, 50, 50]}
              head={["Name", "V...", "A...", "Lo...", "Hi..."]}
              align={["", "", "", "text-right pr-1.5", "text-right pr-1"]}
              row={[
                <IconCell name="block">Green</IconCell>,
                <span className="flex justify-center"><Icon name="glasses" size={15} /></span>,
                <span className="flex justify-center"><Icon name="link" /></span>,
                "1",
                "4",
              ]}
            />
          </Section>
          <Section
            tabs={["3D Objects", "Analysis Objects", "Reslice Objects"]}
            tabExtra={
              <div className="relative z-10 -ml-[18px] flex h-7 flex-1 shrink-0 items-center">
                <button aria-label="Scroll tabs left" className="h-7 w-[15px]"><svg width="8" height="14"><path d="M8 0v14L0 7z" fill="#a0a0a0" /></svg></button>
                <button aria-label="Scroll tabs right" className="grid h-7 w-6 place-items-center bg-[#e5f3ff]"><svg width="8" height="14"><path d="M0 0l8 7-8 7z" /></svg></button>
              </div>
            }
            listClass="h-[125px]"
            tools={["page", "copy", "del", "infoBox", "pages", "boxYellow", "moveDots", "rotateDots", "drop"]}
          >
            <Grid
              cols={[60, 35, 45, 35, 60, 45, 45]}
              head={["Name", "V...", "C...", "T...", "Tran...", "Q...", "Ph..."]}
              rowClass="h-[23px]"
              row={[
                <IconCell name="block">Green</IconCell>,
                <IconCell name="glasses" />,
                <span className="flex justify-center"><IconCell name="glasses" dim /></span>,
                <IconCell name="glasses" dim />,
                <IconCell name="transp">Medium</IconCell>,
                <span className="pl-1">Optimal</span>,
                <span className="flex justify-center"><Icon name="photo" size={14} className="mt-0.5" /></span>,
              ]}
            />
          </Section>
          <Section
            tabs={["STLs", "Polylines", "Simulation Objects", "FEA Mesh"]}
            listClass="h-[122px]"
            tools={["open", "copy", "del", "infoBox", "pages", "folderSync", "boxYellow", "moveDots", "rotateDots", "drop"]}
            disabled={["copy", "del", "infoBox", "pages", "folderSync", "boxYellow", "moveDots", "rotateDots"]}
          >
            <Grid cols={[80, 45, 45, 45, 60]} head={["Name", "Vi...", "C...", "Tr...", "Tran..."]} />
          </Section>
          <Contrast />
          <section className="flex min-h-0 flex-1 flex-col border-t border-[#a0a0a0]">
            <Tabs tabs={["Database Tree"]} />
            <div className="mt-0.5 mr-0.5 ml-0.5 flex-1 overflow-hidden border border-b-0 border-[#828790] bg-white pl-1.5 text-lg leading-7">
              <p className="mt-1">Name</p>
              <p className="pl-[27px] whitespace-nowrap">WorldCoordinateSystem [Mimics::IObject]</p>
            </div>
          </section>
        </div>
        <div className="flex w-[26px] shrink-0 flex-col items-center border-l border-white pt-[25px]">
          <div className="w-[11px] grow-[718] bg-[#858585]" />
          <div className="grow-[187]" />
        </div>
      </div>
    </aside>
  );
}

export default function App() {
  return (
    <div className={`relative flex h-screen flex-col overflow-hidden bg-[#f0f0f0] text-black ${UI}`}>
      <TitleBar />
      <MenuBar />
      <ToolBars />
      <div className="flex min-h-0 flex-1 border-t border-[#666]">
        <main className="flex min-w-0 flex-1 flex-col">
          <div className="grid min-h-0 flex-1 grid-cols-[717fr_712fr] grid-rows-2">
            <Cell className="border-r-4 border-r-[#fafafa] pl-[5px]">
              <Coronal />
              <Scroll before="grow-[162]" after="grow-[197]" />
            </Cell>
            <Cell className="border-l-2 border-l-[#999]">
              <Axial />
              <Scroll before="grow-[180]" after="grow-[179]" />
            </Cell>
            <Cell className="border-r-4 border-r-[#fafafa] pl-[5px]">
              <Sagittal />
              <Scroll before="grow-[163]" after="grow-[196]" />
            </Cell>
            <Cell className="border-l-2 border-l-[#999]">
              <Model3D />
              <SideTools />
            </Cell>
          </div>
          <LogPane />
        </main>
        <SidePanel />
      </div>
      <footer className="flex h-[26px] shrink-0 items-stretch border-t border-[#d7d7d7] bg-[#f0f0f0] pl-0.5 text-lg leading-6">
        <span className="flex-1">Export to PLY</span>
        <span className="my-px w-[209px] border-x border-[#d0d0d0]" />
        <span className="my-px ml-0.5 w-[156px] border border-[#bcbcbc] bg-[#e5e5e5]" />
      </footer>

      <Menu items={FILE_MENU} active="Export" className="top-[63px] left-0 w-[380px]" />
      <Menu items={EXPORT_MENU} active="PLY..." disabled="Txt..." className="top-[288px] left-[373px] w-[174px]" />
    </div>
  );
}
